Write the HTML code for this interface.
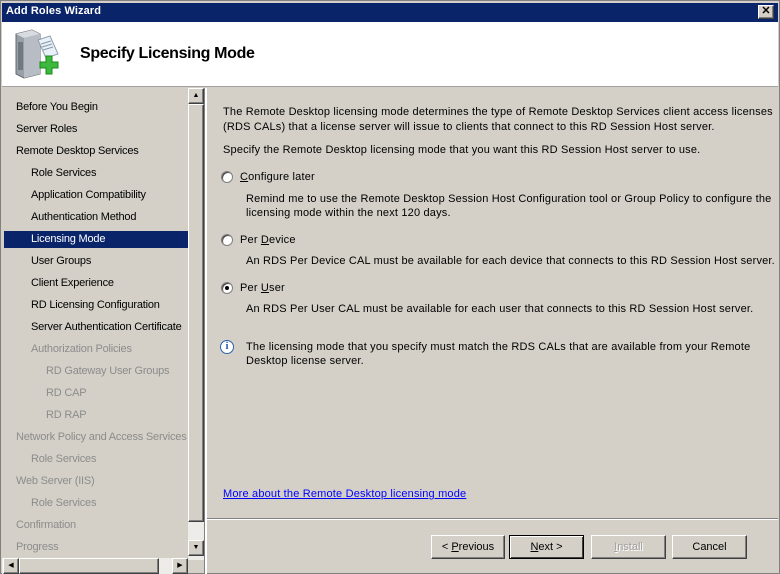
<!DOCTYPE html>
<html><head><style>
*{margin:0;padding:0;box-sizing:border-box}
body{width:780px;height:574px;overflow:hidden;background:#d4d0c8;font-family:"Liberation Sans",sans-serif;font-size:11px;color:#000;position:relative}
.a{position:absolute;white-space:nowrap}
.r{letter-spacing:0.18px}
.nav{position:absolute;left:16px;font-size:11px;letter-spacing:-0.2px}
.g{color:#8c8c8c}
.btn{position:absolute;top:535px;height:24px;background:#d4d0c8;border:1px solid;border-color:#fff #404040 #404040 #fff;box-shadow:inset -1px -1px 0 #808080;text-align:center;line-height:22px;font-size:11px}
.rad{position:absolute;width:12px;height:12px;border-radius:50%;background:#fff;border:1px solid #808080;box-shadow:inset 1px 1px 0 #404040}
.sb{position:absolute;background:#d4d0c8;border:1px solid;border-color:#fff #404040 #404040 #fff;box-shadow:inset -1px -1px 0 #808080}
</style></head><body>
<div class="a" style="left:0;top:0;width:780px;height:574px;border:1px solid #808080"></div>
<div class="a" style="left:2px;top:3px;width:776px;height:19px;background:#0a246a"></div>
<div class="a" style="left:6px;top:5px;color:#fff;font-weight:bold;font-size:11px;letter-spacing:0.1px">Add Roles Wizard</div>
<div class="sb" style="left:758px;top:5px;width:16px;height:14px;font-size:11px;line-height:11px;text-align:center;font-weight:bold">✕</div>
<div class="a" style="left:2px;top:22px;width:776px;height:65px;background:#fff;border-bottom:1px solid #a0a0a0"></div>
<svg class="a" style="left:12px;top:28px" width="50" height="52" viewBox="0 0 50 52">
<path d="M4 6 L20 2 L28 6 L28 46 L12 50 L4 46Z" fill="#9aa0a8" stroke="#606870"/>
<path d="M4 6 L20 2 L28 6 L12 10Z" fill="#d8dce0"/>
<path d="M12 10 L28 6 L28 46 L12 50Z" fill="#b8bcc4"/>
<rect x="6" y="14" width="5" height="28" fill="#707880"/>
<path d="M26 12 L38 8 L46 26 L34 30Z" fill="#e8f0f8" stroke="#90a0b0"/>
<path d="M29 16 L39 13 M30 19 L40 16 M31 22 L41 19" stroke="#8898a8"/>
<path d="M28 34 h6 v-6 h6 v6 h6 v6 h-6 v6 h-6 v-6 h-6z" fill="#3cb83c" stroke="#1a8a1a"/>
</svg>
<div class="a" style="left:80px;top:45px;font-size:16px;font-weight:bold;letter-spacing:-0.35px">Specify Licensing Mode</div>

<div class="nav" style="top:101px">Before You Begin</div>
<div class="nav" style="top:123px">Server Roles</div>
<div class="nav" style="top:145px">Remote Desktop Services</div>
<div class="nav" style="top:167px;left:31px">Role Services</div>
<div class="nav" style="top:189px;left:31px">Application Compatibility</div>
<div class="nav" style="top:211px;left:31px">Authentication Method</div>
<div class="a" style="left:4px;top:231px;width:184px;height:17px;background:#0a246a"></div>
<div class="nav" style="top:233px;left:31px;color:#fff">Licensing Mode</div>
<div class="nav" style="top:255px;left:31px">User Groups</div>
<div class="nav" style="top:277px;left:31px">Client Experience</div>
<div class="nav" style="top:299px;left:31px">RD Licensing Configuration</div>
<div class="nav" style="top:321px;left:31px">Server Authentication Certificate</div>
<div class="nav g" style="top:343px;left:31px">Authorization Policies</div>
<div class="nav g" style="top:365px;left:46px">RD Gateway User Groups</div>
<div class="nav g" style="top:387px;left:46px">RD CAP</div>
<div class="nav g" style="top:409px;left:46px">RD RAP</div>
<div class="nav g" style="top:431px">Network Policy and Access Services</div>
<div class="nav g" style="top:453px;left:31px">Role Services</div>
<div class="nav g" style="top:475px">Web Server (IIS)</div>
<div class="nav g" style="top:497px;left:31px">Role Services</div>
<div class="nav g" style="top:519px">Confirmation</div>
<div class="nav g" style="top:541px">Progress</div>

<div class="a" style="left:188px;top:88px;width:16px;height:472px;background:#eeece8"></div>
<div class="sb" style="left:188px;top:88px;width:16px;height:16px;font-size:7px;line-height:13px;text-align:center">▲</div>
<div class="sb" style="left:188px;top:104px;width:16px;height:418px"></div>
<div class="sb" style="left:188px;top:540px;width:16px;height:16px;font-size:7px;line-height:13px;text-align:center">▼</div>
<div class="a" style="left:2px;top:558px;width:186px;height:16px;background:#eeece8"></div>
<div class="sb" style="left:3px;top:558px;width:16px;height:16px;font-size:7px;line-height:13px;text-align:center">◀</div>
<div class="sb" style="left:19px;top:558px;width:140px;height:16px"></div>
<div class="sb" style="left:172px;top:558px;width:16px;height:16px;font-size:7px;line-height:13px;text-align:center">▶</div>
<div class="a" style="left:204px;top:88px;width:1px;height:486px;background:#808080"></div>
<div class="a" style="left:205px;top:88px;width:2px;height:486px;background:#fff"></div>

<div class="a r" style="left:223px;top:105px;line-height:15px">The Remote Desktop licensing mode determines the type of Remote Desktop Services client access licenses<br>(RDS CALs) that a license server will issue to clients that connect to this RD Session Host server.</div>
<div class="a r" style="left:223px;top:144px">Specify the Remote Desktop licensing mode that you want this RD Session Host server to use.</div>
<div class="rad" style="left:221px;top:171px"></div>
<div class="a r" style="left:240px;top:171px"><u>C</u>onfigure later</div>
<div class="a r" style="left:246px;top:192px;line-height:14px">Remind me to use the Remote Desktop Session Host Configuration tool or Group Policy to configure the<br>licensing mode within the next 120 days.</div>
<div class="rad" style="left:221px;top:234px"></div>
<div class="a r" style="left:240px;top:234px">Per <u>D</u>evice</div>
<div class="a r" style="left:246px;top:255px">An RDS Per Device CAL must be available for each device that connects to this RD Session Host server.</div>
<div class="rad" style="left:221px;top:282px"></div>
<div class="a" style="left:225px;top:286px;width:4px;height:4px;border-radius:50%;background:#000"></div>
<div class="a r" style="left:240px;top:282px">Per <u>U</u>ser</div>
<div class="a r" style="left:246px;top:303px">An RDS Per User CAL must be available for each user that connects to this RD Session Host server.</div>
<div class="a" style="left:220px;top:340px;width:14px;height:14px;border-radius:50%;background:#fff;border:1px solid #3060b0;color:#2050a0;font-weight:bold;font-size:10px;text-align:center;line-height:12px;font-family:'Liberation Serif',serif">i</div>
<div class="a r" style="left:246px;top:340px;line-height:14px">The licensing mode that you specify must match the RDS CALs that are available from your Remote<br>Desktop license server.</div>
<div class="a r" style="left:223px;top:488px;color:#0000ff;text-decoration:underline">More about the Remote Desktop licensing mode</div>

<div class="a" style="left:207px;top:518px;width:571px;height:1px;background:#808080"></div>
<div class="a" style="left:207px;top:519px;width:571px;height:1px;background:#fff"></div>
<div class="btn" style="left:431px;width:74px">&lt; <u>P</u>revious</div>
<div class="btn" style="left:509px;width:75px;border:1px solid #000;box-shadow:inset 1px 1px 0 #fff,inset -1px -1px 0 #404040"><u>N</u>ext &gt;</div>
<div class="btn" style="left:591px;width:75px;color:#a0a0a0;text-shadow:1px 1px 0 #fff"><u>I</u>nstall</div>
<div class="btn" style="left:672px;width:75px">Cancel</div>
</body></html>
